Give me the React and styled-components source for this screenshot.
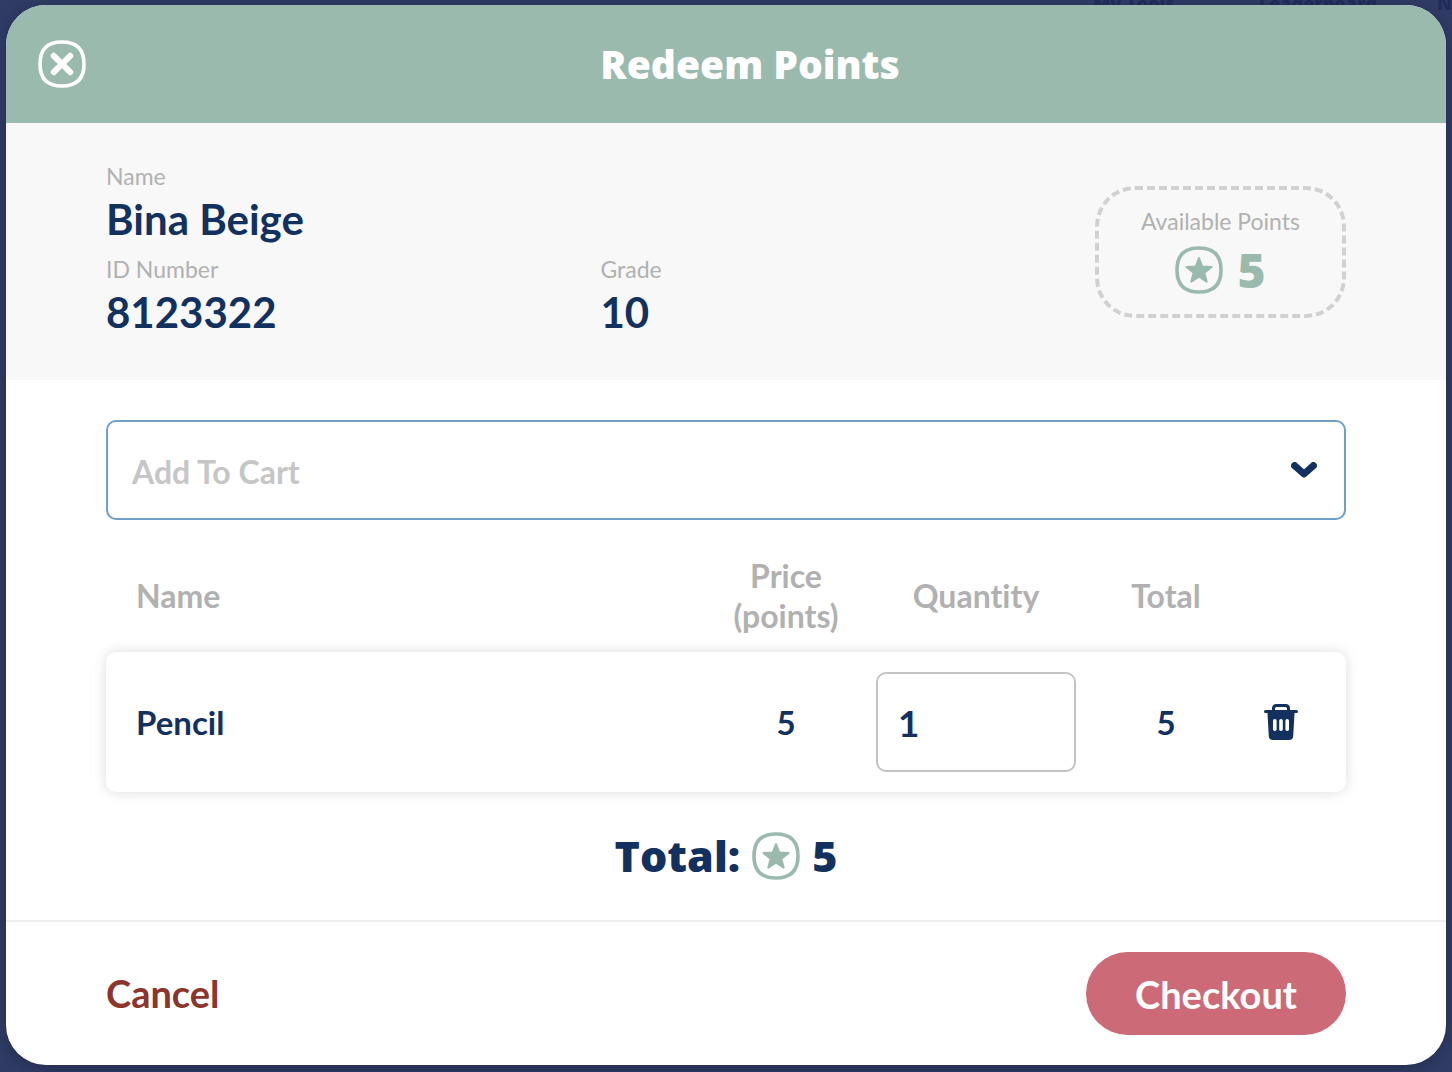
import { useState } from "react";
import styled, { createGlobalStyle } from "styled-components";

const NAVY = "#12315f";
const GREEN = "#9bbaae";
const GREY = "#b1b1b1";
const HEAVY = `"Open Sans", Lato, sans-serif`;

const GlobalStyle = createGlobalStyle`
  * {
    box-sizing: border-box;
  }
  body {
    margin: 0;
    background: #303c66;
    color: ${NAVY};
    font-family: Lato, "Open Sans", sans-serif;
    font-variant-ligatures: none;
  }
  button, input, select {
    font-family: inherit;
    color: inherit;
  }
`;

const Page = styled.div`
  position: relative;
  min-height: 100vh;
  overflow: hidden;
  padding: 5px 6px 7px;
`;

/* the dimmed page under the modal */
const NavBehind = styled.nav`
  position: absolute;
  top: -9px;
  right: -40px;
  display: flex;
  gap: 84px;
  color: #222c5c;
  font-family: ${HEAVY};
  font-size: 18px;
  font-weight: 800;
  line-height: 24px;

  span:last-child {
    margin-left: -24px;
  }
`;

const Modal = styled.main`
  position: relative;
  overflow: hidden;
  border-radius: 40px;
  background: #fff;
  box-shadow: 0 4px 16px rgba(20, 26, 48, 0.4);
`;

const Header = styled.header`
  display: grid;
  grid-template-columns: 48px 1fr;
  align-items: center;
  height: 118px;
  padding: 0 32px;
  background: ${GREEN};
  color: #fff;
`;

const Title = styled.h1`
  margin: 0;
  font-family: ${HEAVY};
  font-size: 39px;
  font-weight: 800;
  line-height: 48px;
  text-align: center;
`;

const IconButton = styled.button`
  display: inline-flex;
  padding: 0;
  border: 0;
  background: none;
  cursor: pointer;
`;

const Info = styled.section`
  display: flex;
  align-items: center;
  padding: 39px 100px;
  background: #f8f8f8;
`;

const Fields = styled.dl`
  flex: 1;
  display: grid;
  grid-template-columns: 1fr 1fr;
  row-gap: 7px;
  margin: 0;
`;

const Field = styled.div`
  grid-column: ${({ $wide }) => ($wide ? "1 / -1" : "auto")};
`;

const Label = styled.dt`
  color: ${GREY};
  font-size: 23px;
  line-height: 28px;
`;

const Value = styled.dd`
  margin: 0;
  font-size: 42px;
  font-weight: 700;
  line-height: 58px;
`;

const PointsBox = styled.div`
  display: flex;
  flex-direction: column;
  align-items: center;
  gap: 11px;
  padding: 17px 42px 20px;
  border: 4px dashed #d1d1d1;
  border-radius: 40px;
  color: ${GREY};
  font-size: 23px;
  line-height: 28px;
`;

const Points = styled.div`
  display: flex;
  align-items: center;
  gap: 14px;
  color: ${GREEN};
  font-family: ${HEAVY};
  font-size: 48px;
  font-weight: 800;
  line-height: 48px;
`;

const Body = styled.section`
  padding: 40px 100px;
`;

const SelectWrap = styled.div`
  position: relative;
  margin-bottom: 36px;

  svg {
    position: absolute;
    top: 42px;
    right: 29px;
    pointer-events: none;
  }
`;

const Select = styled.select`
  display: block;
  width: 100%;
  height: 100px;
  padding: 2px 60px 0 24px;
  border: 2px solid #6f9fc8;
  border-radius: 10px;
  outline: none;
  background: #fff;
  appearance: none;
  color: #c6c6c6;
  font-size: 32px;
  font-weight: 700;
`;

const CartTable = styled.table`
  width: 100%;
  border-spacing: 0;
  table-layout: fixed;
`;

const Th = styled.th`
  width: ${({ $width }) => $width || "auto"};
  padding: 0 0 16px ${({ $first }) => ($first ? "30px" : "0")};
  color: ${GREY};
  font-size: 32px;
  font-weight: 700;
  line-height: 40px;
  text-align: ${({ $first }) => ($first ? "left" : "center")};
`;

const Row = styled.tr`
  border-radius: 10px;
  box-shadow: 0 0 14px rgba(0, 0, 0, 0.14);
`;

const Td = styled.td`
  padding: ${({ $first }) => ($first ? "20px 0 20px 30px" : "20px 0")};
  font-size: 33px;
  font-weight: 700;
  line-height: 40px;
  text-align: ${({ $first }) => ($first ? "left" : "center")};
`;

const ActionTd = styled(Td)`
  padding-right: 20px;
  line-height: 0;
`;

const Quantity = styled.input`
  display: block;
  width: 200px;
  height: 100px;
  margin: 0 auto;
  padding: 0 20px;
  border: 2px solid #c4c4c4;
  border-radius: 10px;
  background: #fff;
  font-size: 37px;
  font-weight: 700;
  appearance: textfield;

  &::-webkit-inner-spin-button {
    display: none;
  }
`;

const Total = styled.div`
  display: flex;
  align-items: center;
  justify-content: center;
  gap: 12px;
  margin-top: 40px;
  font-family: ${HEAVY};
  font-size: 43px;
  font-weight: 800;
  line-height: 48px;

  svg {
    color: ${GREEN};
  }
`;

const Footer = styled.footer`
  display: flex;
  align-items: center;
  justify-content: space-between;
  padding: 30px 100px;
  border-top: 2px solid #efefef;
`;

const Cancel = styled.button`
  padding: 0 0 2px;
  border: 0;
  background: none;
  color: #8b352c;
  font-size: 38px;
  font-weight: 700;
  line-height: 48px;
  cursor: pointer;
`;

const Checkout = styled.button`
  min-width: 260px;
  height: 83px;
  padding: 0 40px;
  border: 0;
  border-radius: 42px;
  background: #cc6b77;
  color: #fff;
  font-size: 38px;
  font-weight: 700;
  cursor: pointer;
`;

const SQUIRCLE =
  "M24 2C38.6 2 46 9.4 46 24C46 38.6 38.6 46 24 46C9.4 46 2 38.6 2 24C2 9.4 9.4 2 24 2Z";

const CloseIcon = () => (
  <svg width="48" height="48" viewBox="0 0 48 48" fill="none" stroke="#fff">
    <path d={SQUIRCLE} strokeWidth="3.6" />
    <path
      d="M15.8 15.8L32.2 32.2M32.2 15.8L15.8 32.2"
      strokeWidth="6"
      strokeLinecap="round"
    />
  </svg>
);

const StarIcon = () => (
  <svg width="48" height="48" viewBox="0 0 48 48" fill="none" stroke="currentColor">
    <path d={SQUIRCLE} strokeWidth="3.6" />
    <path
      d="M24 12L27.3 20.5L36.6 21L29.4 26.7L31.7 35.7L24 30.7L16.3 35.7L18.6 26.7L11.4 21L20.7 20.5Z"
      fill="currentColor"
      strokeWidth="2"
      strokeLinejoin="round"
    />
  </svg>
);

const ChevronIcon = () => (
  <svg width="26" height="16" viewBox="0 0 26 16" fill="none">
    <path
      d="M3.6 3.6L13 12L22.4 3.6"
      stroke={NAVY}
      strokeWidth="7"
      strokeLinecap="round"
      strokeLinejoin="round"
    />
  </svg>
);

const TrashIcon = () => (
  <svg width="34" height="36" viewBox="0 0 34 36">
    <path
      d="M9.5 7V4.5Q9.5 1.5 12.5 1.5H21.5Q24.5 1.5 24.5 4.5V7"
      fill="none"
      stroke={NAVY}
      strokeWidth="3"
    />
    <rect y="6" width="34" height="3" rx="1.5" fill={NAVY} />
    <path d="M3.4 8H30.6L29.2 32Q29 36 25 36H9Q5 36 4.8 32Z" fill={NAVY} />
    <g fill="#fff">
      <rect x="9" y="15" width="3.6" height="12" rx="1.8" />
      <rect x="15.2" y="15" width="3.6" height="12" rx="1.8" />
      <rect x="21.4" y="15" width="3.6" height="12" rx="1.8" />
    </g>
  </svg>
);

const App = () => {
  const [quantity, setQuantity] = useState(1);
  const price = 5;
  const total = price * quantity;

  return (
    <Page>
      <GlobalStyle />
      <NavBehind aria-hidden="true">
        <span>My Tools</span>
        <span>Leaderboard</span>
        <span>Noble</span>
      </NavBehind>
      <Modal>
        <Header>
          <IconButton type="button" aria-label="Close">
            <CloseIcon />
          </IconButton>
          <Title>Redeem Points</Title>
        </Header>
        <Info>
          <Fields>
            <Field $wide>
              <Label>Name</Label>
              <Value>Bina Beige</Value>
            </Field>
            <Field>
              <Label>ID Number</Label>
              <Value>8123322</Value>
            </Field>
            <Field>
              <Label>Grade</Label>
              <Value>10</Value>
            </Field>
          </Fields>
          <PointsBox>
            Available Points
            <Points>
              <StarIcon />
              <span>5</span>
            </Points>
          </PointsBox>
        </Info>
        <Body>
          <SelectWrap>
            <Select aria-label="Add To Cart" defaultValue="">
              <option value="">Add To Cart</option>
              <option value="pencil">Pencil</option>
            </Select>
            <ChevronIcon />
          </SelectWrap>
          <CartTable>
            <thead>
              <tr>
                <Th $first>Name</Th>
                <Th $width="140px">
                  Price
                  <br />
                  (points)
                </Th>
                <Th $width="240px">Quantity</Th>
                <Th $width="140px">Total</Th>
                <Th $width="110px" aria-label="Remove" />
              </tr>
            </thead>
            <tbody>
              <Row>
                <Td $first>Pencil</Td>
                <Td>{price}</Td>
                <Td>
                  <Quantity
                    type="number"
                    min="1"
                    aria-label="Quantity"
                    value={quantity}
                    onChange={(e) => setQuantity(Number(e.target.value))}
                  />
                </Td>
                <Td>{total}</Td>
                <ActionTd>
                  <IconButton type="button" aria-label="Remove Pencil">
                    <TrashIcon />
                  </IconButton>
                </ActionTd>
              </Row>
            </tbody>
          </CartTable>
          <Total>
            <span>Total:</span>
            <StarIcon />
            <span>{total}</span>
          </Total>
        </Body>
        <Footer>
          <Cancel type="button">Cancel</Cancel>
          <Checkout type="button">Checkout</Checkout>
        </Footer>
      </Modal>
    </Page>
  );
};

export default App;
